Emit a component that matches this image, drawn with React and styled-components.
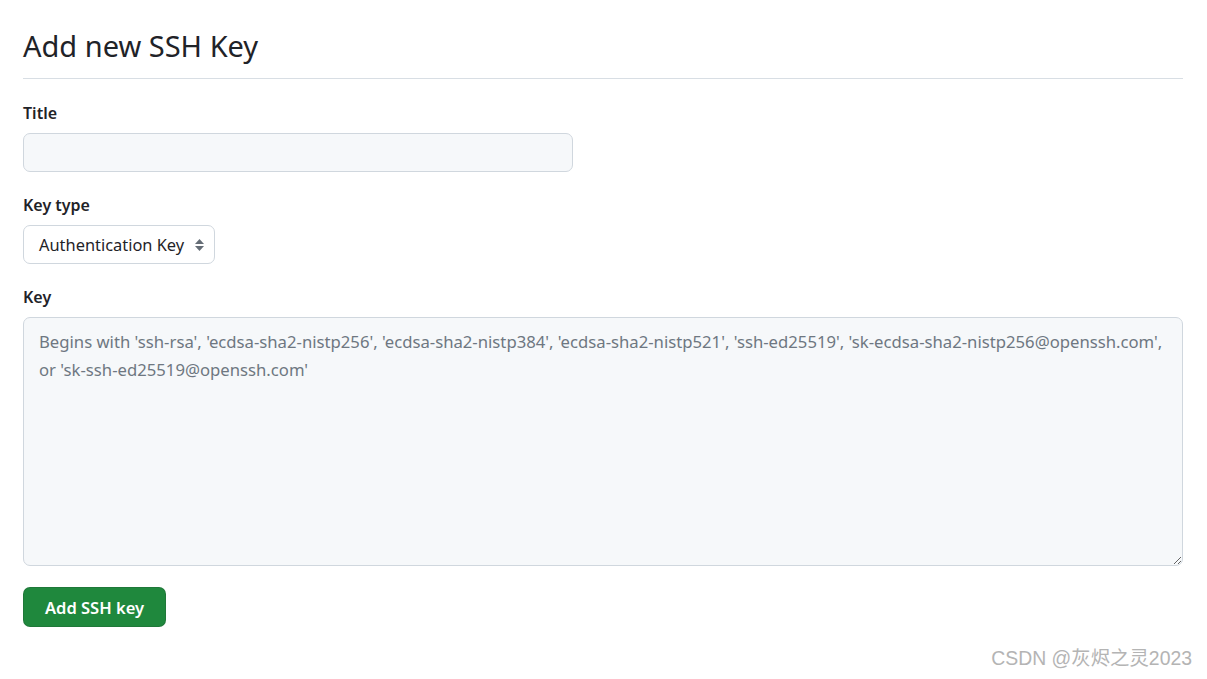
import React from "react";
import styled, { createGlobalStyle } from "styled-components";

const GlobalStyle = createGlobalStyle`
  body {
    margin: 0;
    background: #ffffff;
    font-family: "Segoe UI", "Noto Sans", "Noto Sans CJK SC", sans-serif;
    color: #1f2328;
  }
`;

const Page = styled.div`
  position: relative;
  width: 1207px;
  height: 679px;
  padding: 0 24px 0 23px;
  box-sizing: border-box;
  overflow: hidden;
`;

const Subhead = styled.div`
  padding-top: 26px;
  padding-bottom: 12px;
  border-bottom: 1px solid #d8dee4;
  margin-bottom: 22px;
`;

const Heading = styled.h2`
  margin: 0;
  font-size: 29px;
  font-weight: 400;
  line-height: 40px;
  color: #1f2328;
`;

const Field = styled.div`
  display: flex;
  flex-direction: column;
  margin-bottom: 21px;
`;

const Label = styled.label`
  font-size: 16px;
  font-weight: 600;
  line-height: 22px;
  margin-top: 1px;
  margin-bottom: 9px;
`;

const TextInput = styled.input`
  width: 550px;
  height: 39px;
  box-sizing: border-box;
  border: 1px solid #d0d7de;
  border-radius: 7px;
  background: #f6f8fa;
  font: inherit;
  padding: 0 15px;
  outline: none;
`;

const SelectBox = styled.div`
  display: inline-flex;
  align-items: center;
  align-self: flex-start;
  gap: 10px;
  height: 39px;
  box-sizing: border-box;
  padding: 0 9px 0 15px;
  border: 1px solid #d0d7de;
  border-radius: 7px;
  background: #ffffff;
  font-size: 16.4px;
  color: #1f2328;
`;

const KeyArea = styled.textarea`
  display: block;
  width: 100%;
  height: 249px;
  box-sizing: border-box;
  border: 1px solid #d0d7de;
  border-radius: 7px;
  background: #f6f8fa;
  padding: 10px 15px;
  font-family: inherit;
  font-size: 16.7px;
  line-height: 28px;
  color: #1f2328;
  resize: vertical;
  outline: none;

  &::placeholder {
    color: #6e7781;
    opacity: 1;
  }
`;

const SubmitButton = styled.button`
  height: 40px;
  padding: 0 21px;
  border: 1px solid rgba(31, 35, 40, 0.15);
  border-radius: 7px;
  background: #1f883d;
  color: #ffffff;
  font-family: inherit;
  font-size: 16.5px;
  font-weight: 600;
  cursor: pointer;
`;

const Watermark = styled.div`
  position: absolute;
  right: 15px;
  bottom: 8px;
  font-family: "Liberation Sans", "Noto Sans CJK SC", sans-serif;
  font-size: 19.4px;
  color: #b4b4b4;
`;

const UpDown = () => (
  <svg width="11" height="16" viewBox="0 0 11 16" aria-hidden="true">
    <path d="M5.5 2 L10 7 H1 Z" fill="#656d76" />
    <path d="M5.5 14 L10 9 H1 Z" fill="#656d76" />
  </svg>
);

export default function App() {
  return (
    <>
      <GlobalStyle />
      <Page>
        <Subhead>
          <Heading>Add new SSH Key</Heading>
        </Subhead>
        <Field>
          <Label>Title</Label>
          <TextInput type="text" />
        </Field>
        <Field>
          <Label>Key type</Label>
          <SelectBox>
            Authentication Key
            <UpDown />
          </SelectBox>
        </Field>
        <Field>
          <Label>Key</Label>
          <KeyArea placeholder="Begins with 'ssh-rsa', 'ecdsa-sha2-nistp256', 'ecdsa-sha2-nistp384', 'ecdsa-sha2-nistp521', 'ssh-ed25519', 'sk-ecdsa-sha2-nistp256@openssh.com', or 'sk-ssh-ed25519@openssh.com'" />
        </Field>
        <SubmitButton>Add SSH key</SubmitButton>
        <Watermark>CSDN @灰烬之灵2023</Watermark>
      </Page>
    </>
  );
}
